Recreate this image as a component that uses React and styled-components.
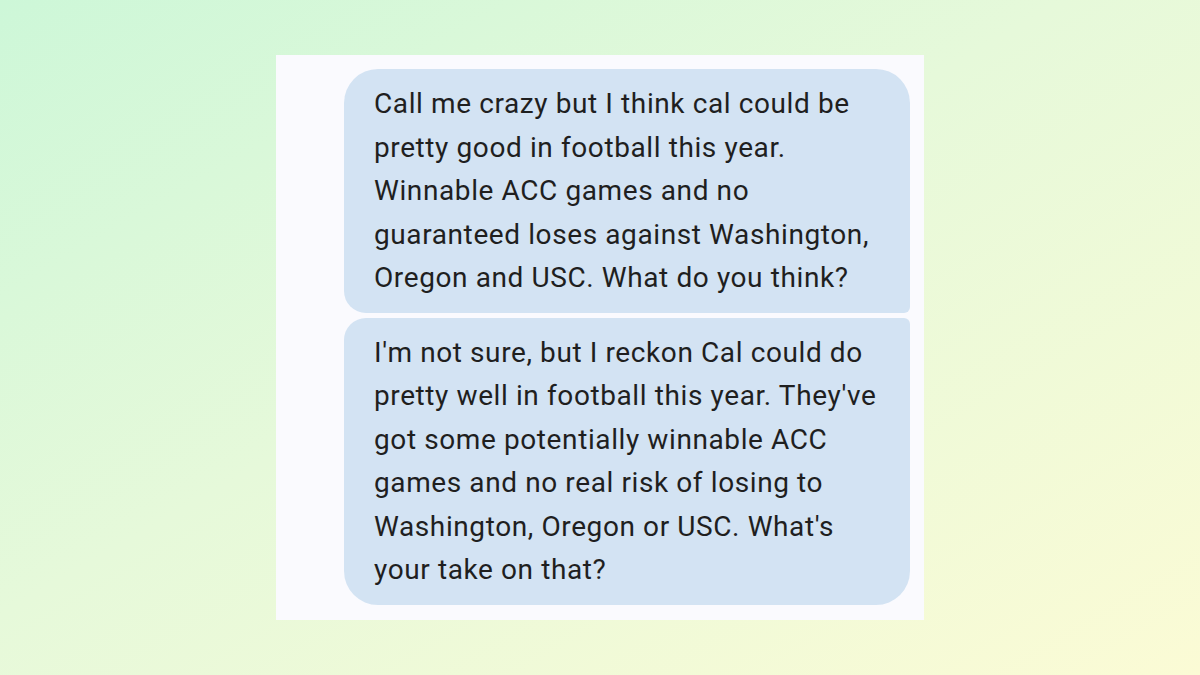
import React from 'react';
import styled, { createGlobalStyle } from 'styled-components';

const messages = [
  {
    id: 'q',
    corners: '34px 34px 6px 22px',
    lines: [
      'Call me crazy but I think cal could be',
      'pretty good in football this year.',
      'Winnable ACC games and no',
      'guaranteed loses against Washington,',
      'Oregon and USC. What do you think?'
    ]
  },
  {
    id: 'a',
    corners: '22px 6px 34px 34px',
    lines: [
      "I'm not sure, but I reckon Cal could do",
      "pretty well in football this year. They've",
      'got some potentially winnable ACC',
      'games and no real risk of losing to',
      "Washington, Oregon or USC. What's",
      'your take on that?'
    ]
  }
];

const App = () => (
  <>
    <GlobalStyle />
    <Page>
      <Panel>
        {messages.map(message => (
          <Bubble key={message.id} $corners={message.corners}>
            {message.lines.map(line => (
              <Line key={line}>{line}</Line>
            ))}
          </Bubble>
        ))}
      </Panel>
    </Page>
  </>
);

const GlobalStyle = createGlobalStyle`
  html, body {
    margin: 0;
    padding: 0;
  }
  body {
    font-family: Roboto, 'Noto Sans', sans-serif;
  }
`;

const Page = styled.div`
  width: 1200px;
  height: 675px;
  display: flex;
  align-items: center;
  justify-content: center;
  background: linear-gradient(150deg, #cdf7d8 0%, #e6f9da 45%, #fbfbd5 100%);
`;

const Panel = styled.div`
  width: 648px;
  height: 565px;
  box-sizing: border-box;
  padding: 14px 14px 16px 68px;
  background: #fafafe;
  display: flex;
  flex-direction: column;
  gap: 5px;
`;

const Bubble = styled.div`
  background: #d3e3f3;
  border-radius: ${p => p.$corners};
  padding: 13px 20px 13px 30px;
  color: #1f1f1f;
  font-size: 28px;
  letter-spacing: 0.6px;
  line-height: 43.5px;
`;

const Line = styled.div`
  white-space: nowrap;
`;

export default App;
